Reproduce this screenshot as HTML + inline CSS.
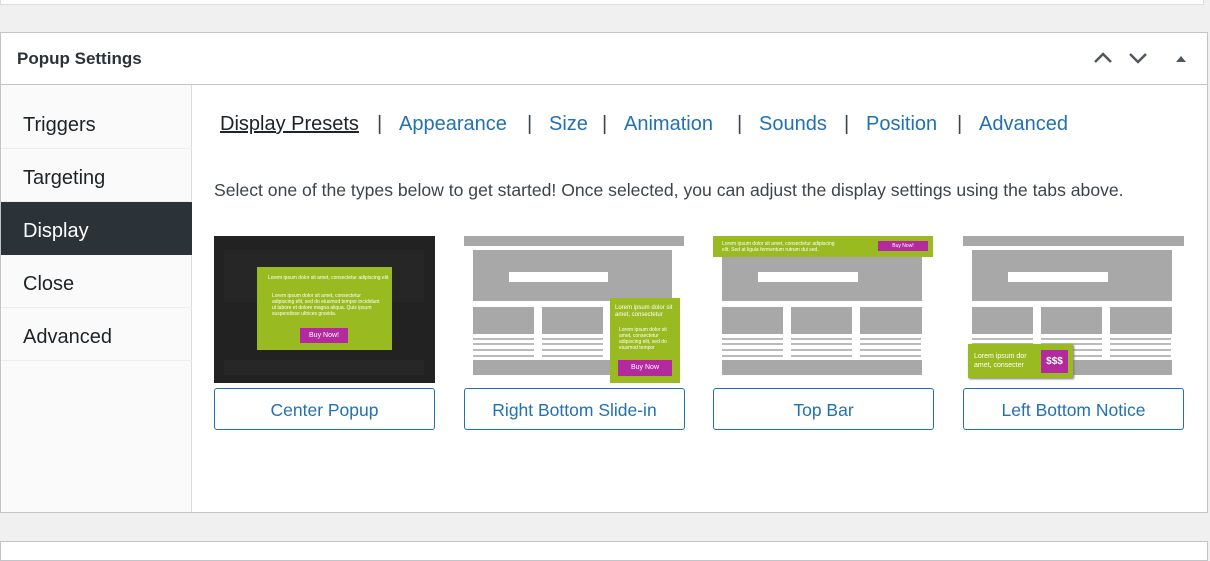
<!DOCTYPE html>
<html><head><meta charset="utf-8"><style>
*{margin:0;padding:0;box-sizing:border-box}
body{width:1210px;height:553px;background:#f0f0f1;position:relative;overflow:hidden;font-family:"Liberation Sans",sans-serif}
.a{position:absolute}
.side div{position:absolute;left:0;width:191px;height:53px;border-bottom:1px solid #eee;font-size:20px;color:#1d2327;padding-left:22px;line-height:58px}
.tab{position:absolute;top:111px;font-size:20px;color:#2271b1;white-space:nowrap;line-height:26px}
.sep{position:absolute;top:111px;font-size:20px;color:#3c434a;line-height:26px}
.g{background:#a8a8a8;position:absolute}
.w{background:#fff;position:absolute}
.btn{position:absolute;top:388px;width:221px;height:42px;border:1px solid #2271b1;border-radius:3px;color:#2271b1;font-size:17.5px;text-align:center;line-height:42px;background:#fff}
.ln{position:absolute;height:2px;background:#bbb}
.green{background:#9aba22;position:absolute}
.pur{background:#b5299f;position:absolute;color:#fff;font-size:7px;text-align:center}
.tt{position:absolute;color:#fff;font-size:5px;line-height:6px}
</style></head><body>
<div class="a" style="left:0;top:-1px;width:1204px;height:6px;background:#fff;border:1px solid #ddd"></div>
<div class="a" style="left:0;top:32px;width:1208px;height:481px;background:#fff;border:1px solid #c3c4c7"></div>
<div class="a" style="left:1px;top:84px;width:1206px;height:1px;background:#c3c4c7"></div>
<div class="a" style="left:17px;top:49px;font-size:17px;font-weight:bold;color:#2c3338">Popup Settings</div>
<svg class="a" style="left:1090px;top:50px" width="110" height="16"><path d="M5 12 L13 4 L21 12" stroke="#50575e" stroke-width="2.5" fill="none"/><path d="M40 4 L48 12 L56 4" stroke="#50575e" stroke-width="2.5" fill="none"/><path d="M86 12 L91 6 L96 12Z" fill="#50575e"/></svg>
<div class="a side" style="left:1px;top:85px;width:191px;height:427px;background:#fafafa;border-right:1px solid #dcdcde">
<div style="top:11px;border-top:0">Triggers</div>
<div style="top:64px">Targeting</div>
<div style="top:117px;background:#2c3338;color:#fff;border:0">Display</div>
<div style="top:170px">Close</div>
<div style="top:223px">Advanced</div>
</div>
<div class="tab" style="left:220px;color:#1d2327;text-decoration:underline">Display Presets</div>
<div class="sep" style="left:377px">|</div>
<div class="tab" style="left:399px">Appearance</div>
<div class="sep" style="left:527px">|</div>
<div class="tab" style="left:549px">Size</div>
<div class="sep" style="left:602px">|</div>
<div class="tab" style="left:624px">Animation</div>
<div class="sep" style="left:737px">|</div>
<div class="tab" style="left:759px">Sounds</div>
<div class="sep" style="left:844px">|</div>
<div class="tab" style="left:866px">Position</div>
<div class="sep" style="left:957px">|</div>
<div class="tab" style="left:979px">Advanced</div>
<div class="a" style="left:214px;top:180px;font-size:17.6px;color:#3c434a;white-space:nowrap">Select one of the types below to get started! Once selected, you can adjust the display settings using the tabs above.</div>

<!-- thumb 1 -->
<div class="a" style="left:214px;top:236px;width:221px;height:147px;background:#222"></div>
<div class="a" style="left:224px;top:250px;width:200px;height:52px;background:#262626"></div>
<div class="a" style="left:224px;top:360px;width:200px;height:15px;background:#272727"></div>
<div class="green" style="left:257px;top:267px;width:135px;height:83px"></div>
<div class="tt" style="left:268px;top:275px">Lorem ipsum dolor sit amet, consectetur adipiscing elit</div>
<div class="tt" style="left:272px;top:293px;width:108px">Lorem ipsum dolor sit amet, consectetur adipiscing elit, sed do eiusmod tempor incididunt ut labore et dolore magna aliqua. Quis ipsum suspendisse ultrices gravida.</div>
<div class="pur" style="left:300px;top:328px;width:48px;height:15px;line-height:15px">Buy Now!</div>

<!-- thumb 2 -->
<div class="g" style="left:464px;top:236px;width:220px;height:10px"></div>
<div class="g" style="left:473px;top:250px;width:199px;height:51px"></div>
<div class="w" style="left:509px;top:272px;width:99px;height:10px"></div>
<div class="g" style="left:473px;top:307px;width:61px;height:27px"></div>
<div class="g" style="left:542px;top:307px;width:61px;height:27px"></div>
<div class="ln" style="left:473px;top:338px;width:61px"></div><div class="ln" style="left:473px;top:343px;width:61px"></div><div class="ln" style="left:473px;top:349px;width:61px"></div><div class="ln" style="left:473px;top:355px;width:61px"></div>
<div class="ln" style="left:542px;top:338px;width:61px"></div><div class="ln" style="left:542px;top:343px;width:61px"></div><div class="ln" style="left:542px;top:349px;width:61px"></div><div class="ln" style="left:542px;top:355px;width:61px"></div>
<div class="g" style="left:473px;top:360px;width:199px;height:15px"></div>
<div class="green" style="left:610px;top:298px;width:70px;height:85px"></div>
<div class="tt" style="left:615px;top:305px;width:62px;font-size:6px;line-height:7px">Lorem ipsum dolor sit amet, consectetur</div>
<div class="tt" style="left:619px;top:327px;width:56px">Lorem ipsum dolor sit amet, consectetur adipiscing elit, sed do eiusmod tempor</div>
<div class="pur" style="left:618px;top:360px;width:54px;height:16px;line-height:16px">Buy Now</div>

<!-- thumb 3 -->
<div class="g" style="left:722px;top:257px;width:200px;height:44px"></div>
<div class="green" style="left:713px;top:236px;width:220px;height:21px"></div>
<div class="tt" style="left:722px;top:241px;width:120px">Lorem ipsum dolor sit amet, consectetur adipiscing elit. Sed at ligula fermentum rutrum dui sed.</div>
<div class="pur" style="left:878px;top:241px;width:50px;height:10px;line-height:10px;font-size:5px">Buy Now!</div>
<div class="w" style="left:758px;top:272px;width:100px;height:10px"></div>
<div class="g" style="left:722px;top:307px;width:61px;height:27px"></div>
<div class="g" style="left:791px;top:307px;width:61px;height:27px"></div>
<div class="g" style="left:860px;top:307px;width:62px;height:27px"></div>
<div class="ln" style="left:722px;top:338px;width:200px;background:repeating-linear-gradient(90deg,#bbb 0 61px,#fff 61px 69px)"></div>
<div class="ln" style="left:722px;top:343px;width:200px;background:repeating-linear-gradient(90deg,#bbb 0 61px,#fff 61px 69px)"></div>
<div class="ln" style="left:722px;top:349px;width:200px;background:repeating-linear-gradient(90deg,#bbb 0 61px,#fff 61px 69px)"></div>
<div class="ln" style="left:722px;top:355px;width:200px;background:repeating-linear-gradient(90deg,#bbb 0 61px,#fff 61px 69px)"></div>
<div class="g" style="left:722px;top:360px;width:200px;height:15px"></div>

<!-- thumb 4 -->
<div class="g" style="left:963px;top:236px;width:221px;height:10px"></div>
<div class="g" style="left:972px;top:250px;width:200px;height:51px"></div>
<div class="w" style="left:1008px;top:272px;width:100px;height:10px"></div>
<div class="g" style="left:972px;top:307px;width:61px;height:27px"></div>
<div class="g" style="left:1041px;top:307px;width:61px;height:27px"></div>
<div class="g" style="left:1110px;top:307px;width:62px;height:27px"></div>
<div class="ln" style="left:972px;top:338px;width:200px;background:repeating-linear-gradient(90deg,#bbb 0 61px,#fff 61px 69px)"></div>
<div class="ln" style="left:972px;top:343px;width:200px;background:repeating-linear-gradient(90deg,#bbb 0 61px,#fff 61px 69px)"></div>
<div class="ln" style="left:972px;top:349px;width:200px;background:repeating-linear-gradient(90deg,#bbb 0 61px,#fff 61px 69px)"></div>
<div class="ln" style="left:972px;top:355px;width:200px;background:repeating-linear-gradient(90deg,#bbb 0 61px,#fff 61px 69px)"></div>
<div class="g" style="left:972px;top:360px;width:200px;height:15px"></div>
<div class="green" style="left:968px;top:344px;width:105px;height:34px;box-shadow:1px 1px 2px #777"></div>
<div class="tt" style="left:974px;top:352px;font-size:7px;line-height:9px;width:64px">Lorem ipsum dor amet, consecter</div>
<div class="pur" style="left:1041px;top:350px;width:27px;height:23px;line-height:23px;font-size:10px;font-weight:bold">$$$</div>

<div class="btn" style="left:214px">Center Popup</div>
<div class="btn" style="left:464px">Right Bottom Slide-in</div>
<div class="btn" style="left:713px">Top Bar</div>
<div class="btn" style="left:963px">Left Bottom Notice</div>

<div class="a" style="left:0;top:541px;width:1208px;height:20px;background:#fff;border:1px solid #c3c4c7"></div>
</body></html>
